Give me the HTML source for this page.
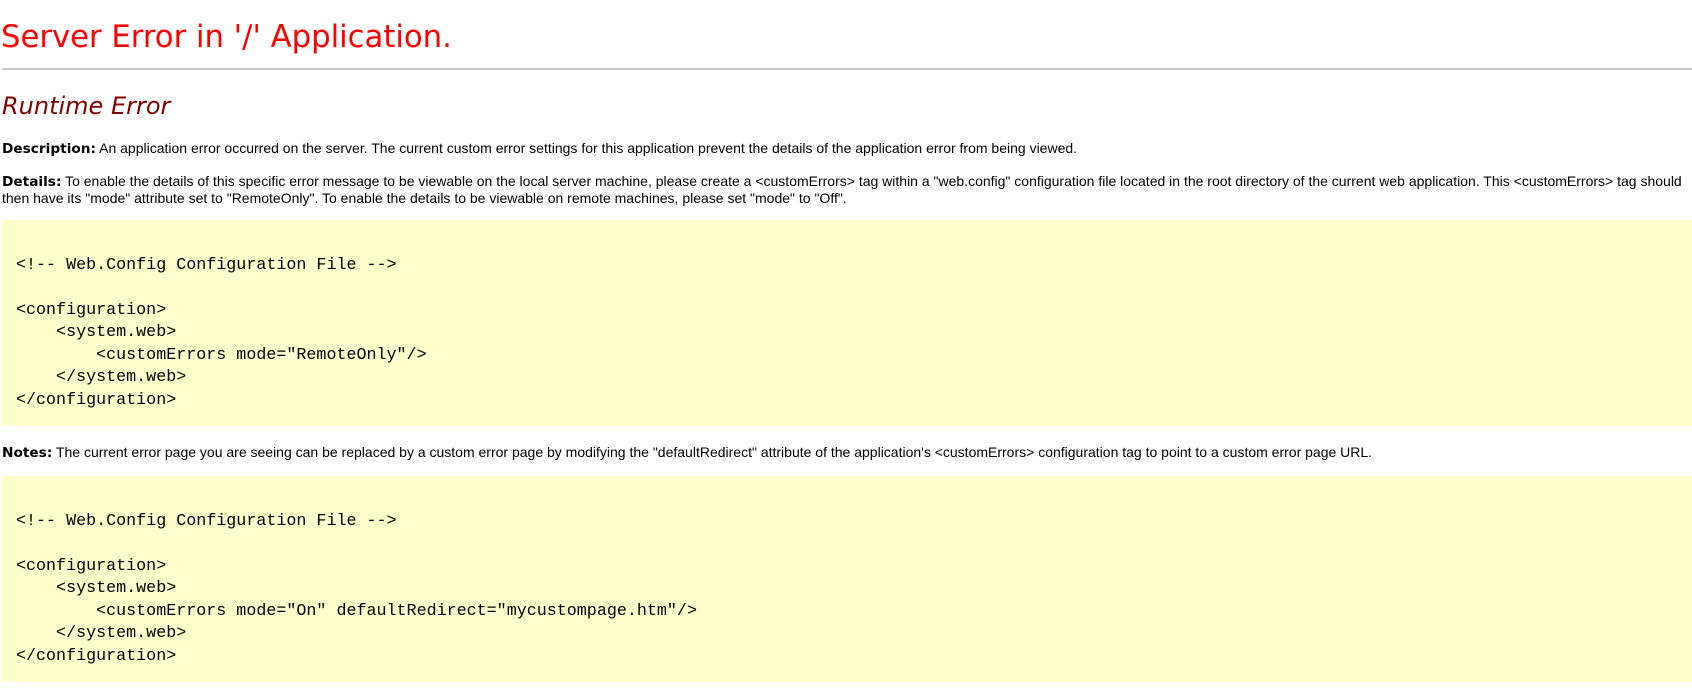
<!DOCTYPE html>
<html><head><meta charset="utf-8"><style>
html,body{margin:0;padding:0;background:#fff;width:1692px;height:700px;overflow:hidden}
body{font-family:"Liberation Sans",Arial,sans-serif;font-size:14px;color:#000;position:relative}
.a{position:absolute;left:2px;white-space:nowrap}
h1{position:absolute;margin:0;left:1px;top:16px;font-family:"DejaVu Sans",sans-serif;font-weight:normal;font-size:30.7px;line-height:44px;color:#ff0000;white-space:nowrap}
.hr{position:absolute;left:2px;right:0;top:68px;height:2px;background:#c8c8c8}
h2{position:absolute;margin:0;left:2px;top:91px;font-family:"DejaVu Sans",sans-serif;font-style:italic;font-weight:normal;font-size:24px;line-height:30px;color:#800000;white-space:nowrap}
b{font-family:"DejaVu Sans",sans-serif;font-weight:bold;font-size:13.7px}
p{line-height:16px;margin:0}
pre{position:absolute;left:2px;right:0;margin:0;background:#ffffcc;font-family:"Liberation Mono",monospace;font-size:16.7px;line-height:22.5px;padding:12px 14px 14px 14px;box-sizing:border-box;height:206px}
</style></head><body>
<h1>Server Error in '/' Application.</h1>
<div class="hr"></div>
<h2>Runtime Error</h2>
<p class="a" style="top:140px"><b>Description:</b> An application error occurred on the server. The current custom error settings for this application prevent the details of the application error from being viewed.</p>
<p class="a" style="top:173px"><b>Details:</b> To enable the details of this specific error message to be viewable on the local server machine, please create a &lt;customErrors&gt; tag within a "web.config" configuration file located in the root directory of the current web application. This &lt;customErrors&gt; tag should<br>then have its "mode" attribute set to "RemoteOnly". To enable the details to be viewable on remote machines, please set "mode" to "Off".</p>
<pre style="top:220px">

&lt;!-- Web.Config Configuration File --&gt;

&lt;configuration&gt;
    &lt;system.web&gt;
        &lt;customErrors mode="RemoteOnly"/&gt;
    &lt;/system.web&gt;
&lt;/configuration&gt;</pre>
<p class="a" style="top:444px"><b>Notes:</b> The current error page you are seeing can be replaced by a custom error page by modifying the "defaultRedirect" attribute of the application's &lt;customErrors&gt; configuration tag to point to a custom error page URL.</p>
<pre style="top:476px">

&lt;!-- Web.Config Configuration File --&gt;

&lt;configuration&gt;
    &lt;system.web&gt;
        &lt;customErrors mode="On" defaultRedirect="mycustompage.htm"/&gt;
    &lt;/system.web&gt;
&lt;/configuration&gt;</pre>
</body></html>
